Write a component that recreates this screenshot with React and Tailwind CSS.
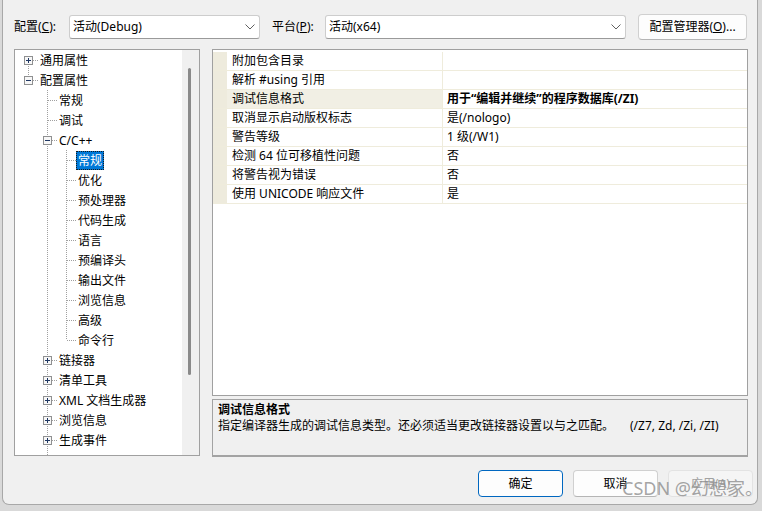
import React from "react";

const FONT = "font-['Noto_Sans','Noto_Sans_CJK_SC',sans-serif]";

const DOT = { stroke: "#a0a0a0", strokeWidth: 1, strokeDasharray: "1 1" };

// connector cell of the tree: ' ' empty, 'v' through line, or {up, down, box}
function Conn({ c }) {
  return (
    <svg width="19" height="20" className="shrink-0">
      {c === "v" && <line x1="9.5" y1="0" x2="9.5" y2="20" {...DOT} />}
      {typeof c === "object" && (
        <>
          {c.up && <line x1="9.5" y1="0" x2="9.5" y2="10" {...DOT} />}
          {c.down && <line x1="9.5" y1="10" x2="9.5" y2="20" {...DOT} />}
          <line x1={c.box ? 14 : 10} y1="10.5" x2="19" y2="10.5" {...DOT} />
          {c.box && (
            <>
              <rect x="5.5" y="6.5" width="8" height="8" fill="#f7f7f7" stroke="#8f9091" />
              <line x1="7" y1="10.5" x2="12" y2="10.5" stroke="#1f3763" />
              {c.box === "+" && <line x1="9.5" y1="8" x2="9.5" y2="13" stroke="#1f3763" />}
            </>
          )}
        </>
      )}
    </svg>
  );
}

const mid = { up: true, down: true };
const tree = [
  { label: "通用属性", cells: [{ down: true, box: "+" }] },
  { label: "配置属性", cells: [{ up: true, box: "-" }] },
  { label: "常规", cells: [" ", mid] },
  { label: "调试", cells: [" ", mid] },
  { label: "C/C++", cells: [" ", { ...mid, box: "-" }] },
  { label: "常规", cells: [" ", "v", mid], selected: true },
  { label: "优化", cells: [" ", "v", mid] },
  { label: "预处理器", cells: [" ", "v", mid] },
  { label: "代码生成", cells: [" ", "v", mid] },
  { label: "语言", cells: [" ", "v", mid] },
  { label: "预编译头", cells: [" ", "v", mid] },
  { label: "输出文件", cells: [" ", "v", mid] },
  { label: "浏览信息", cells: [" ", "v", mid] },
  { label: "高级", cells: [" ", "v", mid] },
  { label: "命令行", cells: [" ", "v", { up: true }] },
  { label: "链接器", cells: [" ", { ...mid, box: "+" }] },
  { label: "清单工具", cells: [" ", { ...mid, box: "+" }] },
  { label: "XML 文档生成器", cells: [" ", { ...mid, box: "+" }] },
  { label: "浏览信息", cells: [" ", { ...mid, box: "+" }] },
  { label: "生成事件", cells: [" ", { ...mid, box: "+" }] },
  { label: "", cells: [" ", mid] },
];

const props = [
  ["附加包含目录", ""],
  ["解析 #using 引用", ""],
  ["调试信息格式", "用于“编辑并继续”的程序数据库(/ZI)", true],
  ["取消显示启动版权标志", "是(/nologo)"],
  ["警告等级", "1 级(/W1)"],
  ["检测 64 位可移植性问题", "否"],
  ["将警告视为错误", "否"],
  ["使用 UNICODE 响应文件", "是"],
];

function Chevron() {
  return (
    <svg width="10" height="6" viewBox="0 0 10 6" className="shrink-0">
      <path d="M0.5 0.5 L5 5 L9.5 0.5" fill="none" stroke="#606060" strokeWidth="1" />
    </svg>
  );
}

function Combo({ text, width }) {
  return (
    <div className={`${width} h-[24px] bg-white border border-[#cdcdcd] border-b-[#9a9a9a] rounded-[3px] flex items-center pl-[3px] pr-[4px]`}>
      <span className="flex-1 text-[12px] leading-[16px] text-black">{text}</span>
      <Chevron />
    </div>
  );
}

export default function App() {
  return (
    <div className={`w-[762px] h-[511px] bg-[#d9d9d9] overflow-hidden text-black ${FONT}`}>
      <div className="relative ml-[2px] w-[756px] h-[505px] bg-[#f0f0f0] border-x border-b border-[#a8a8a8] rounded-b-[7px] pl-[11px] pt-[14px]">
        {/* top row */}
        <div className="flex items-center h-[26px]">
          <span className="w-[55px] text-[12px] leading-[16px]">
            配置(<u>C</u>):
          </span>
          <Combo text="活动(Debug)" width="w-[191px]" />
          <span className="ml-[12px] w-[53px] text-[12px] leading-[16px]">
            平台(<u>P</u>):
          </span>
          <Combo text="活动(x64)" width="w-[301px]" />
          <button className="ml-[12px] w-[109px] h-[26px] bg-[#fdfdfd] border border-[#d0d0d0] border-b-[#b5b5b5] rounded-[4px] text-[12px] leading-[16px]">
            配置管理器(<u>O</u>)...
          </button>
        </div>

        {/* main area */}
        <div className="mt-[9px] flex gap-[12px] h-[408px]">
          {/* tree */}
          <div className="w-[186px] h-[407px] border border-[#a0a0a0] bg-white flex overflow-hidden">
            <div className="flex-1 pl-[4px] overflow-hidden">
              {tree.map((n, i) => (
                <div key={i} className="flex items-center h-[20px]">
                  {n.cells.map((c, j) => (
                    <Conn key={j} c={c} />
                  ))}
                  {n.label && (
                    <span
                      className={`border px-[1px] text-[12px] leading-[17px] whitespace-nowrap ${
                        n.selected
                          ? "bg-[#0078d7] text-white border-dotted border-[#1a1a1a]"
                          : "border-transparent"
                      }`}
                    >
                      {n.label}
                    </span>
                  )}
                </div>
              ))}
            </div>
            <div className="w-[17px] bg-[#f0f0f0] pl-[6px] pt-[18px]">
              <div className="w-[3px] h-[307px] rounded-full bg-[#8a8a8a]" />
            </div>
          </div>

          {/* property grid + description */}
          <div className="w-[536px] h-[408px] flex flex-col">
            <div className="h-[347px] border border-[#a0a0a0] bg-white pt-[2px]">
              {props.map(([name, value, sel], i) => (
                <div key={i} className="flex h-[19px] border-b border-[#efecdc] text-[12px] leading-[18px]">
                  <div className="w-[14px] bg-[#eeebdd]" />
                  <div className={`w-[216px] pl-[5px] border-r border-[#efecdc] whitespace-nowrap ${sel ? "bg-[#f1efe4]" : ""}`}>
                    {name}
                  </div>
                  <div className={`flex-1 pl-[4px] whitespace-nowrap ${sel ? "font-bold" : ""}`}>{value}</div>
                </div>
              ))}
            </div>
            <div className="mt-[3px] h-[58px] border border-[#a3a3a3] border-b-2 bg-[#f0f0f0] pl-[5px] pt-[2px] text-[12px] leading-[16px]">
              <div className="font-bold">调试信息格式</div>
              <div className="flex whitespace-nowrap">
                <span>指定编译器生成的调试信息类型。还必须适当更改链接器设置以与之匹配。</span>
                <span className="ml-[16px]">(/Z7, Zd, /Zi, /ZI)</span>
              </div>
            </div>
          </div>
        </div>

        {/* buttons */}
        <div className="mt-[13px] flex justify-end gap-[10px] pr-[4px]">
          <button className="w-[85px] h-[27px] bg-[#fdfdfd] border border-[#0067c0] rounded-[4px] text-[12px] leading-[16px]">
            确定
          </button>
          <button className="w-[85px] h-[27px] bg-[#fdfdfd] border border-[#d0d0d0] border-b-[#b5b5b5] rounded-[4px] text-[12px] leading-[16px]">
            取消
          </button>
          <button className="w-[85px] h-[27px] bg-[#f5f5f5] border border-[#e3e3e3] rounded-[4px] text-[12px] leading-[16px] text-[#a2a2a2]">
            应用(A)
          </button>
        </div>

        {/* watermark */}
        <div className="absolute left-[619px] top-[478px] text-[18px] leading-[21px] text-[#8d8d8d]/80 whitespace-nowrap">
          CSDN @幻想家。
        </div>
      </div>
    </div>
  );
}
